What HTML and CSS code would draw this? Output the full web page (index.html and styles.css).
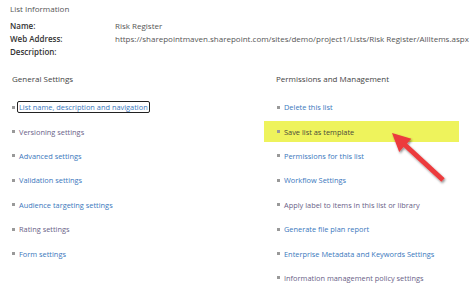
FILE: index.html
```html
<!DOCTYPE html>
<html>
<head>
<meta charset="utf-8">
<link rel="stylesheet" href="styles.css">
</head>
<body>
<div class="page">
  <div class="info">
    <div class="info-title">List Information</div>
    <div class="info-grid">
      <div class="label">Name:</div><div class="value">Risk Register</div>
      <div class="label">Web Address:</div><div class="value">https://sharepointmaven.sharepoint.com/sites/demo/project1/Lists/Risk Register/AllItems.aspx</div>
      <div class="label">Description:</div><div class="value"></div>
    </div>
  </div>
  <div class="cols">
    <div class="col col-left">
      <div class="col-title">General Settings</div>
      <ul class="items">
        <li><span class="link focus">List name, description and navigation</span></li>
        <li><span class="link visited">Versioning settings</span></li>
        <li><span class="link">Advanced settings</span></li>
        <li><span class="link">Validation settings</span></li>
        <li><span class="link">Audience targeting settings</span></li>
        <li><span class="link visited">Rating settings</span></li>
        <li><span class="link">Form settings</span></li>
      </ul>
    </div>
    <div class="col col-right">
      <div class="col-title">Permissions and Management</div>
      <ul class="items">
        <li><span class="link">Delete this list</span></li>
        <li class="hl"><span class="link dark">Save list as template</span></li>
        <li><span class="link">Permissions for this list</span></li>
        <li><span class="link">Workflow Settings</span></li>
        <li><span class="link visited">Apply label to items in this list or library</span></li>
        <li><span class="link">Generate file plan report</span></li>
        <li><span class="link">Enterprise Metadata and Keywords Settings</span></li>
        <li><span class="link visited">Information management policy settings</span></li>
      </ul>
    </div>
  </div>
  <svg class="arrow" width="474" height="287" viewBox="0 0 474 287">
    <defs>
      <filter id="sh" x="-20%" y="-20%" width="140%" height="140%">
        <feDropShadow dx="1" dy="1.5" stdDeviation="1" flood-color="#000" flood-opacity="0.45"/>
      </filter>
    </defs>
    <polygon filter="url(#sh)" fill="#ec3b3d" points="392,133 411.4,138.7 407.0,143.5 444.7,178.2 441.3,181.8 403.6,147.1 399.2,152.0"/>
  </svg>
</div>
</body>
</html>
```
FILE: styles.css
```css
html, body {
  margin: 0;
  padding: 0;
  background: #fff;
}
body {
  font-family: "Open Sans", "Noto Sans", sans-serif;
  font-size: 8px;
  color: #444;
  width: 474px;
  height: 287px;
  overflow: hidden;
}
.page {
  position: relative;
  width: 474px;
  height: 287px;
}
.info {
  padding: 2px 0 0 10px;
}
.info-title {
  color: #555;
  line-height: 13px;
  margin-bottom: 4px;
}
.info-grid {
  display: grid;
  grid-template-columns: 105px auto;
  grid-auto-rows: 13px;
  line-height: 13px;
  white-space: nowrap;
}
.label {
  font-weight: 600;
  color: #333;
}
.value {
  color: #555;
}
.cols {
  display: grid;
  grid-template-columns: 276px 198px;
  margin-top: 14px;
}
.col-left {
  padding-left: 12px;
}
.col-title {
  color: #444;
  font-size: 8px;
  line-height: 14px;
}
.items {
  list-style: none;
  margin: 9px 0 0 0;
  padding: 0;
  font-size: 7.4px;
}
.items li {
  box-sizing: border-box;
  height: 24.4px;
  display: flex;
  align-items: center;
  white-space: nowrap;
}
.items li::before {
  content: "";
  width: 3px;
  height: 3px;
  background: #999;
  margin-right: 4px;
  flex: none;
}
.col-right .items li {
  margin-left: -12px;
  padding-left: 13px;
}
.items li.hl {
  background-color: #eef35c;
  background-clip: content-box;
  padding-top: 1.7px;
  padding-bottom: 1.7px;
  padding-left: 0;
  width: 195px;
}
.items li.hl::before {
  margin-left: 13px;
}
.link {
  color: #3a78bd;
}
.link.visited {
  color: #6a5f88;
}
.link.dark {
  color: #4a4a3a;
}
.link.focus {
  border: 1.5px solid #222;
  border-radius: 2px;
  padding: 0 1px;
  margin-left: -2px;
}
.arrow {
  position: absolute;
  left: 0;
  top: 0;
  pointer-events: none;
}
```
